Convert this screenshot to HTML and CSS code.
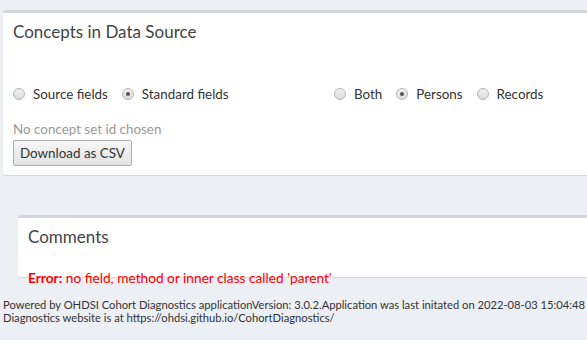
FILE: index.html
```html
<!DOCTYPE html>
<html lang="en">
<head>
  <meta charset="UTF-8" />
  <title>Cohort Diagnostics</title>
  <link rel="stylesheet" href="styles.css">
</head>
<body>

  <!-- Concepts box -->
  <div class="box box-concepts">
    <div class="box-header">
      <h3 class="box-title">Concepts in Data Source</h3>
    </div>
    <div class="box-body">
      <div class="radio-row">
        <div class="radio-group left">
          <label class="radio"><span class="dot"></span>Source fields</label>
          <label class="radio"><span class="dot checked"></span>Standard fields</label>
        </div>
        <div class="radio-group">
          <label class="radio"><span class="dot"></span>Both</label>
          <label class="radio"><span class="dot checked"></span>Persons</label>
          <label class="radio"><span class="dot"></span>Records</label>
        </div>
      </div>
      <div class="muted">No concept set id chosen</div>
      <button class="btn">Download as CSV</button>
    </div>
  </div>

  <!-- Comments box -->
  <div class="box box-comments">
    <div class="box-header">
      <h3 class="box-title">Comments</h3>
    </div>
  </div>
  <div class="error"><b>Error:</b> no field, method or inner class called 'parent'</div>

  <div class="footer">
    <div>Powered by OHDSI Cohort Diagnostics applicationVersion: 3.0.2.Application was last initated on 2022-08-03 15:04:48 EDT.</div>
    <div>Diagnostics website is at https://ohdsi.github.io/CohortDiagnostics/</div>
  </div>

</body>
</html>
```

FILE: styles.css
```css
* { box-sizing: border-box; }

html, body {
  overflow: hidden;
}

body {
  margin: 0;
  padding-top: 10px;
  background: #ecf0f5;
  font-family: 'Lato', sans-serif;
  font-size: 13.4px;
  color: #333;
  width: 587px;
}

.box {
  background: #fff;
  border-top: 3px solid #d2d6de;
  border-radius: 3px;
  box-shadow: 0 1px 1px rgba(0, 0, 0, 0.1);
  width: 700px;
}

.box-concepts {
  margin-left: 3px;
  height: 165px;
}

.box-comments {
  margin-left: 18px;
  margin-top: 40px;
  height: 62px;
}

.box-header {
  padding: 9px 10px;
}

.box-title {
  margin: 0;
  font-size: 17px;
  font-weight: 400;
  line-height: 1.15;
  color: #444;
}

.box-body {
  padding: 0 10px;
}

.radio-row {
  display: flex;
  margin-top: 34px;
  height: 18px;
  align-items: center;
}

.radio-group {
  display: flex;
  gap: 14px;
}

.radio-group.left {
  width: 321px;
}

.radio {
  display: flex;
  align-items: center;
  gap: 8px;
  color: #333;
}

.dot {
  width: 12px;
  height: 12px;
  border-radius: 50%;
  border: 1px solid #b5b5b5;
  background: linear-gradient(#f0f0f0, #dcdcdc);
  position: relative;
}

.dot.checked::after {
  content: "";
  position: absolute;
  left: 3px;
  top: 3px;
  width: 4px;
  height: 4px;
  border-radius: 50%;
  background: #555;
}

.muted {
  margin-top: 17px;
  color: #999;
  line-height: 18px;
}

.btn {
  display: block;
  margin-top: 2px;
  font-family: inherit;
  font-size: 13.4px;
  color: #333;
  padding: 3px 6px;
  height: 26px;
  border: 1px solid #adadad;
  border-radius: 2px;
  background: linear-gradient(#f6f6f6, #e3e3e3);
}

.error {
  margin: -8px 0 0 28px;
  color: #ff0000;
  font-size: 13.7px;
  line-height: 18px;
}

.error b {
  font-weight: 700;
}

.footer {
  margin: 11px 0 0 3px;
  font-size: 11.2px;
  line-height: 13px;
  white-space: nowrap;
}
```
